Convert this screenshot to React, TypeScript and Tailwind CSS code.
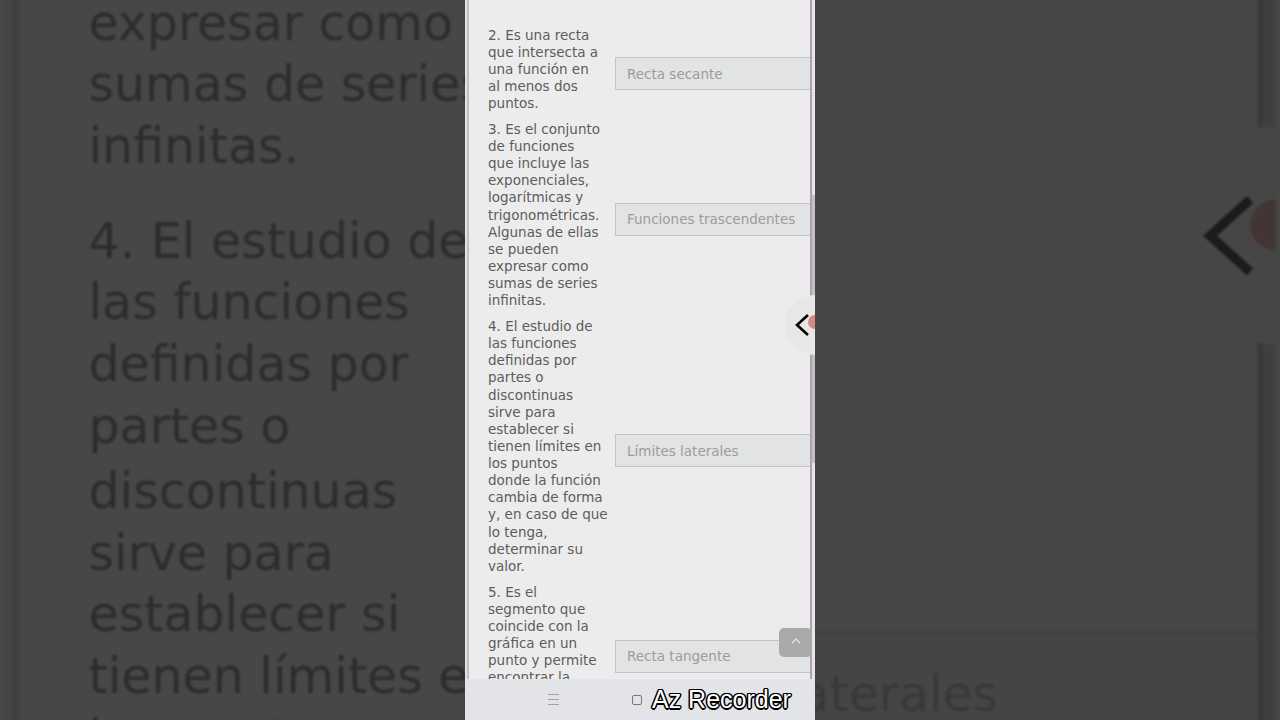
const items = [
  {
    lines: ['2. Es una recta', 'que intersecta a', 'una función en', 'al menos dos', 'puntos.'],
    answer: 'Recta secante',
  },
  {
    lines: [
      '3. Es el conjunto',
      'de funciones',
      'que incluye las',
      'exponenciales,',
      'logarítmicas y',
      'trigonométricas.',
      'Algunas de ellas',
      'se pueden',
      'expresar como',
      'sumas de series',
      'infinitas.',
    ],
    answer: 'Funciones trascendentes',
  },
  {
    lines: [
      '4. El estudio de',
      'las funciones',
      'definidas por',
      'partes o',
      'discontinuas',
      'sirve para',
      'establecer si',
      'tienen límites en',
      'los puntos',
      'donde la función',
      'cambia de forma',
      'y, en caso de que',
      'lo tenga,',
      'determinar su',
      'valor.',
    ],
    answer: 'Límites laterales',
  },
  {
    lines: [
      '5. Es el',
      'segmento que',
      'coincide con la',
      'gráfica en un',
      'punto y permite',
      'encontrar la',
      'pendiente de la',
      'función.',
    ],
    answer: 'Recta tangente',
  },
]

function PhoneScreen() {
  return (
    <div className="relative w-[350px] h-[720px] flex flex-col overflow-hidden bg-[#ececec] font-['DejaVu_Sans',sans-serif]">
      <div className="h-[679px] flex">
        <div className="w-[2px] bg-[#e2e2e2]" />
        <div className="flex-1 overflow-hidden border-l-2 border-r-2 border-l-[#cab7ce] border-r-[#b59cb9] pl-[19px] pt-[26.5px]">
          {items.map(item => (
            <div key={item.answer} className="flex items-center">
              <div className="w-[123px] shrink-0 pb-[8.6px] text-[13.5px] leading-[17.14px] text-[#5c5c5c] whitespace-nowrap">
                {item.lines.map(l => (
                  <div key={l}>{l}</div>
                ))}
              </div>
              <div className="ml-[4px] -mr-[6px] flex-1 h-[33px] flex items-center pl-[11px] bg-[#e2e3e3] border border-[#c4c4c4] text-[13.5px] text-[#9c9c9c] whitespace-nowrap">
                {item.answer}
              </div>
            </div>
          ))}
        </div>
        <div className="w-[3px] flex flex-col bg-[#e6e6e6]">
          <div className="h-[195px]" />
          <div className="h-[268px] bg-[#c2c2c2]" />
        </div>
      </div>

      <div className="h-[41px] flex items-center bg-[#e3e4e8] pl-[83px]">
        <div className="w-[11px] flex flex-col gap-[4px]">
          <div className="h-px bg-[#a3a3a3]" />
          <div className="h-px bg-[#a3a3a3]" />
          <div className="h-px bg-[#a3a3a3]" />
        </div>
        <div className="ml-[73px] w-[10px] h-[10px] rounded-[2px] border-[1.5px] border-[#7a7a7a]" />
        <span className="ml-[10px] font-['Liberation_Sans',Arial,sans-serif] text-[25px] leading-none text-white [text-shadow:1px_1px_0_#000,-1px_-1px_0_#000,1px_-1px_0_#000,-1px_1px_0_#000,0_1.5px_0_#000,0_-1.5px_0_#000,1.5px_0_0_#000,-1.5px_0_0_#000]">
          Az Recorder
        </span>
      </div>

      {/* floating side handle */}
      <div className="absolute left-[320px] top-[295px] w-[60px] h-[60px] rounded-full bg-[#e7e7e7]" />
      <svg className="absolute left-[329px] top-[313px]" width="16" height="24" viewBox="0 0 16 24">
        <path d="M14 2 L3 12 L14 22" fill="none" stroke="#000" strokeWidth="2.6" />
      </svg>
      <div className="absolute left-[343px] top-[315px] w-[14px] h-[14px] rounded-full bg-[#d98a80]" />

      {/* scroll to top */}
      <div className="absolute left-[314px] top-[628px] w-[33px] h-[29px] rounded-[5px] bg-[#a9a9a9] flex justify-center pt-[10px]">
        <svg width="10" height="6" viewBox="0 0 10 6">
          <path d="M1 5 L5 1 L9 5" fill="none" stroke="#e8e8e8" strokeWidth="1.2" />
        </svg>
      </div>
    </div>
  )
}

export default function App() {
  return (
    <div className="relative w-[1280px] h-[720px] overflow-hidden bg-[#474747]">
      {/* blurred, zoomed copy of the video frame behind the phone */}
      <div className="absolute left-[4.5px] top-[-944px] origin-top-left scale-[3.63] brightness-[0.235] contrast-[0.786] blur-[0.35px]">
        <PhoneScreen />
      </div>

      <div className="relative flex h-[720px]">
        <div className="w-[465px] shrink-0" />
        <PhoneScreen />
      </div>
    </div>
  )
}
